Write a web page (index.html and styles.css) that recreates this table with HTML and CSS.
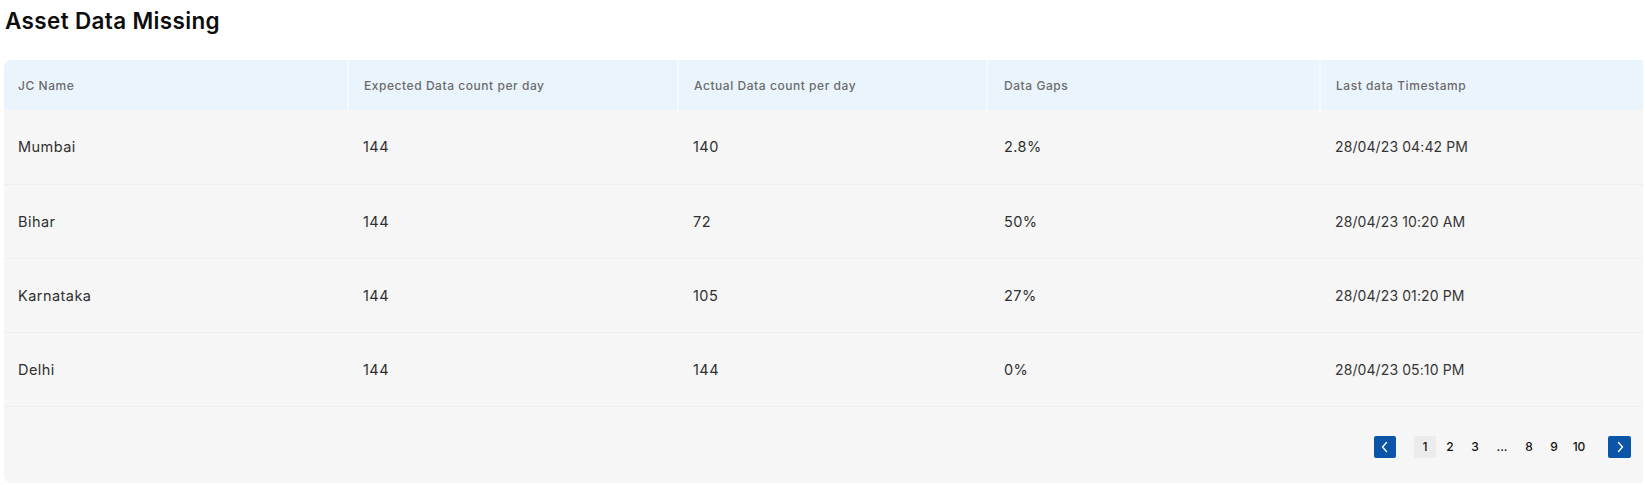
FILE: index.html
```html
<!DOCTYPE html>
<html lang="en">
<head>
<meta charset="utf-8">
<title>Asset Data Missing</title>
<link rel="stylesheet" href="styles.css">
</head>
<body>
<div class="page">
  <h1 class="title">Asset Data Missing</h1>
  <div class="card">
    <table class="grid">
      <colgroup>
        <col class="c1"><col class="c2"><col class="c3"><col class="c4"><col class="c5">
      </colgroup>
      <thead>
        <tr>
          <th>JC Name</th>
          <th>Expected Data count per day</th>
          <th>Actual Data count per day</th>
          <th>Data Gaps</th>
          <th>Last data Timestamp</th>
        </tr>
      </thead>
      <tbody>
        <tr><td>Mumbai</td><td>144</td><td>140</td><td>2.8%</td><td class="ts">28/04/23 04:42 PM</td></tr>
        <tr><td>Bihar</td><td>144</td><td>72</td><td>50%</td><td class="ts">28/04/23 10:20 AM</td></tr>
        <tr><td>Karnataka</td><td>144</td><td>105</td><td>27%</td><td class="ts">28/04/23 01:20 PM</td></tr>
        <tr><td>Delhi</td><td>144</td><td>144</td><td>0%</td><td class="ts">28/04/23 05:10 PM</td></tr>
      </tbody>
    </table>
    <div class="pager">
      <button class="nav" aria-label="Previous">
        <svg width="10" height="12" viewBox="0 0 10 12"><path d="M6.5 1.5 L2.5 6 L6.5 10.5" fill="none" stroke="#fff" stroke-width="1.4" stroke-linecap="round" stroke-linejoin="round"/></svg>
      </button>
      <div class="pages">
        <span class="pg active">1</span>
        <span class="pg">2</span>
        <span class="pg">3</span>
        <span class="pg dots">...</span>
        <span class="pg">8</span>
        <span class="pg">9</span>
        <span class="pg">10</span>
      </div>
      <button class="nav" aria-label="Next">
        <svg width="10" height="12" viewBox="0 0 10 12"><path d="M3.5 1.5 L7.5 6 L3.5 10.5" fill="none" stroke="#fff" stroke-width="1.4" stroke-linecap="round" stroke-linejoin="round"/></svg>
      </button>
    </div>
  </div>
</div>
</body>
</html>
```
FILE: styles.css
```css
* { box-sizing: border-box; }
html, body { margin: 0; padding: 0; background: #fff; }
body { font-family: Inter, "Noto Sans", Arial, sans-serif; color: #2f2f2f; }

.page { padding: 8px 2px 0 4px; }

.title {
  margin: 0 0 26px 1px;
  font-size: 22.5px;
  line-height: 26px;
  font-weight: 600;
  color: #0d0d0d;
  letter-spacing: 0.35px;
}

.card {
  background: #f6f6f6;
  border-radius: 8px 0 0 8px;
  overflow: hidden;
  height: 423px;
}

.grid {
  width: 100%;
  border-collapse: collapse;
  table-layout: fixed;
}
.c1 { width: 344px; }
.c2 { width: 330px; }
.c3 { width: 309px; }
.c4 { width: 333px; }

.grid thead tr { background: #eaf4fd; height: 50px; }
.grid th {
  text-align: left;
  font-size: 12px;
  font-weight: 500;
  color: #6b6b6b;
  letter-spacing: 0.55px;
  padding: 0 15px;
  border-left: 2px solid #f3f9fe;
  white-space: nowrap;
}
.grid th:first-child { border-left: none; padding-left: 14px; }
.grid th:nth-child(4) { padding-left: 16px; }

.grid tbody tr { height: 74px; border-bottom: 1px solid #eeeeee; }
.grid td {
  font-size: 14.5px;
  font-weight: 400;
  letter-spacing: 0.45px;
  color: #2f2f2f;
  padding: 0 15px;
}
.grid td:first-child { padding-left: 14px; }
.grid td:nth-child(4) { padding-left: 17px; }
.grid td.ts { font-size: 14px; letter-spacing: 0.1px; color: #353535; }

.pager {
  display: flex;
  align-items: center;
  justify-content: flex-end;
  padding: 29px 12px 0 0;
  gap: 18px;
}
.nav {
  width: 22px;
  height: 22px;
  border: none;
  border-radius: 2px;
  background: #0b55a8;
  padding: 0;
  display: flex;
  align-items: center;
  justify-content: center;
  cursor: pointer;
}
.nav:last-child { width: 23px; }
.pages { display: flex; gap: 3px; }
.pg {
  min-width: 22px;
  height: 22px;
  display: flex;
  align-items: center;
  justify-content: center;
  font-size: 12px;
  font-weight: 500;
  color: #111;
  border-radius: 2px;
}
.pg.dots { min-width: 26px; }
.pg.active { background: #ececec; }
```
